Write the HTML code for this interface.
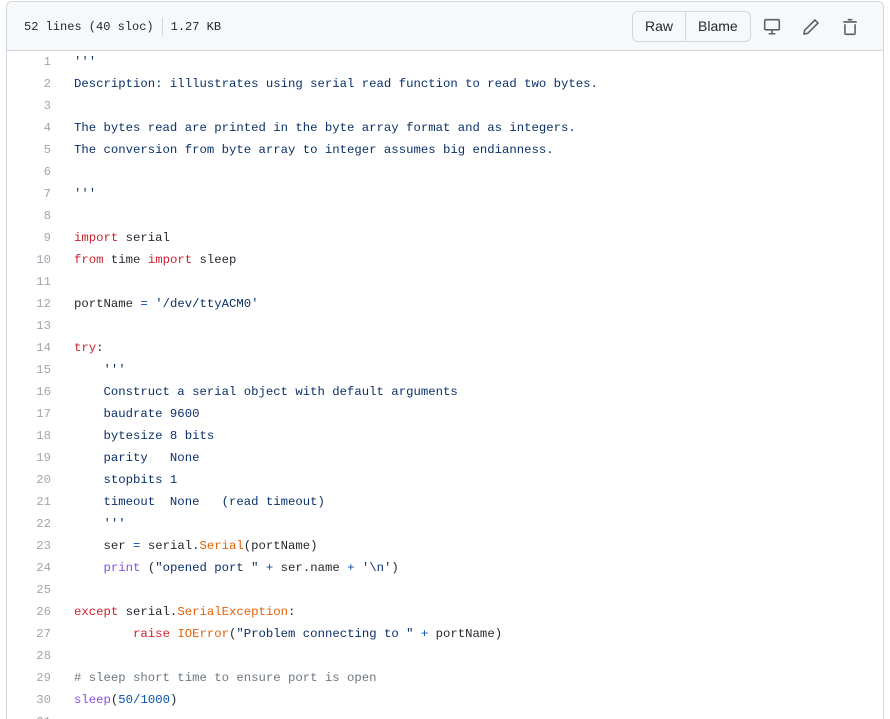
<!DOCTYPE html>
<html><head><style>
html,body{margin:0;background:#fff;width:890px;height:719px;overflow:hidden;font-family:"Liberation Sans",sans-serif}
.wrap{position:relative;width:890px;height:719px;overflow:hidden}
.box{position:absolute;left:6px;top:1px;width:876px;height:740px;border:1px solid #d0d7de;border-radius:6px}
.hdr{height:48px;background:#f6f8fa;border-bottom:1px solid #d0d7de;border-radius:6px 6px 0 0;position:relative}
.info{position:absolute;left:17px;top:16px;font-family:"Liberation Mono",monospace;font-size:12px;color:#24292f}
.sep{display:inline-block;width:1px;height:18px;background:#d0d7de;vertical-align:middle;margin:0 8px}
.grp{position:absolute;left:625px;top:9px;height:29px;border:1px solid #d0d7de;border-radius:6px;background:#f6f8fa;display:flex;font-size:14px;color:#24292f}
.grp div{line-height:29px;padding:0 12px}
.grp div+div{border-left:1px solid #d0d7de}
.ic{position:absolute;top:16px}
.code{font-family:"Liberation Mono",monospace;font-size:12.3px;color:#24292f}
.l{height:22px;line-height:22px;white-space:pre;position:relative}
.n{position:absolute;left:0;width:44px;text-align:right;color:#a0a7ae}
.t{position:absolute;left:67px}
.k{color:#cf222e}.s{color:#0a3069}.f{color:#8250df}.c{color:#6e7781}.o{color:#e36209}.m{color:#0550ae}
</style></head><body><div class="wrap">
<div class="box">
<div class="hdr">
<div class="info">52 lines (40 sloc)<span class="sep"></span>1.27 KB</div>
<div class="grp"><div>Raw</div><div>Blame</div></div>
<svg class="ic" style="left:756px" width="18" height="18" viewBox="0 0 16 16" fill="none" stroke="#57606a" stroke-width="1.4"><rect x="1.5" y="1.5" width="13" height="9" rx="1"/><path d="M8 10.5v3M5 14h6"/></svg>
<svg class="ic" style="left:795px" width="18" height="18" viewBox="0 0 16 16" fill="none" stroke="#57606a" stroke-width="1.4"><path d="M11.5 1.8l2.7 2.7L5 13.7 1.8 14.2 2.3 11z"/></svg>
<svg class="ic" style="left:834px" width="18" height="18" viewBox="0 0 16 16" fill="none" stroke="#57606a" stroke-width="1.4"><path d="M6 1.5h4M2 3.5h12M3.5 5.5v8a1 1 0 001 1h7a1 1 0 001-1v-8"/></svg>
</div>
<div class="code">
<div class="l"><span class="n">1</span><span class="t s">'''</span></div>
<div class="l"><span class="n">2</span><span class="t s">Description: illlustrates using serial read function to read two bytes.</span></div>
<div class="l"><span class="n">3</span></div>
<div class="l"><span class="n">4</span><span class="t s">The bytes read are printed in the byte array format and as integers.</span></div>
<div class="l"><span class="n">5</span><span class="t s">The conversion from byte array to integer assumes big endianness.</span></div>
<div class="l"><span class="n">6</span></div>
<div class="l"><span class="n">7</span><span class="t s">'''</span></div>
<div class="l"><span class="n">8</span></div>
<div class="l"><span class="n">9</span><span class="t"><span class="k">import</span> serial</span></div>
<div class="l"><span class="n">10</span><span class="t"><span class="k">from</span> time <span class="k">import</span> sleep</span></div>
<div class="l"><span class="n">11</span></div>
<div class="l"><span class="n">12</span><span class="t">portName <span class="m">=</span> <span class="s">'/dev/ttyACM0'</span></span></div>
<div class="l"><span class="n">13</span></div>
<div class="l"><span class="n">14</span><span class="t"><span class="k">try</span>:</span></div>
<div class="l"><span class="n">15</span><span class="t s">    '''</span></div>
<div class="l"><span class="n">16</span><span class="t s">    Construct a serial object with default arguments</span></div>
<div class="l"><span class="n">17</span><span class="t s">    baudrate 9600</span></div>
<div class="l"><span class="n">18</span><span class="t s">    bytesize 8 bits</span></div>
<div class="l"><span class="n">19</span><span class="t s">    parity   None</span></div>
<div class="l"><span class="n">20</span><span class="t s">    stopbits 1</span></div>
<div class="l"><span class="n">21</span><span class="t s">    timeout  None   (read timeout)</span></div>
<div class="l"><span class="n">22</span><span class="t s">    '''</span></div>
<div class="l"><span class="n">23</span><span class="t">    ser <span class="m">=</span> serial.<span class="o">Serial</span>(portName)</span></div>
<div class="l"><span class="n">24</span><span class="t">    <span class="f">print</span> (<span class="s">"opened port "</span> <span class="m">+</span> ser.name <span class="m">+</span> <span class="s">'\n'</span>)</span></div>
<div class="l"><span class="n">25</span></div>
<div class="l"><span class="n">26</span><span class="t"><span class="k">except</span> serial.<span class="o">SerialException</span>:</span></div>
<div class="l"><span class="n">27</span><span class="t">        <span class="k">raise</span> <span class="o">IOError</span>(<span class="s">"Problem connecting to "</span> <span class="m">+</span> portName)</span></div>
<div class="l"><span class="n">28</span></div>
<div class="l"><span class="n">29</span><span class="t c"># sleep short time to ensure port is open</span></div>
<div class="l"><span class="n">30</span><span class="t"><span class="f">sleep</span>(<span class="m">50</span><span class="m">/</span><span class="m">1000</span>)</span></div>
<div class="l"><span class="n">31</span></div>
</div>
</div>
</div></body></html>
